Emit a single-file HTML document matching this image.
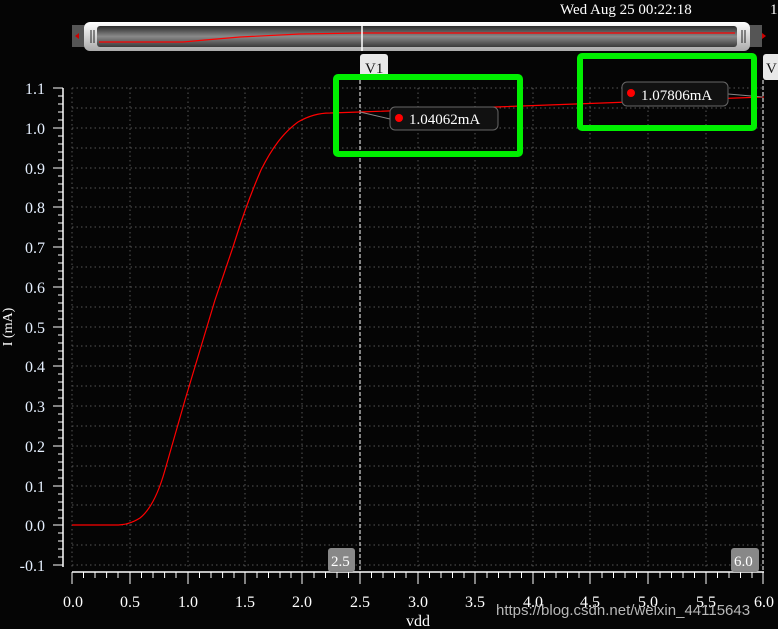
<!DOCTYPE html>
<html><head><meta charset="utf-8"><style>
html,body{margin:0;padding:0;background:#050505;width:778px;height:629px;overflow:hidden}
svg{display:block}
text{font-family:"Liberation Serif",serif;fill:#fff}
</style></head><body>
<svg width="778" height="629" viewBox="0 0 778 629" xmlns="http://www.w3.org/2000/svg">
<defs>
<linearGradient id="sb" x1="0" y1="0" x2="0" y2="1">
<stop offset="0" stop-color="#2a2a2a"/><stop offset="0.5" stop-color="#8a8a8a"/><stop offset="1" stop-color="#3a3a3a"/>
</linearGradient>
<linearGradient id="fr" x1="0" y1="0" x2="0" y2="1">
<stop offset="0" stop-color="#fff"/><stop offset="1" stop-color="#aaa"/>
</linearGradient>
</defs>
<text x="560" y="14" font-size="15">Wed Aug 25 00:22:18</text>
<text x="770" y="14" font-size="15">1</text>
<rect x="72" y="25" width="690" height="22" fill="#555"/>
<rect x="84" y="22" width="666" height="29" rx="6" fill="url(#fr)"/>
<rect x="97" y="26" width="640" height="21" rx="3" fill="url(#sb)"/>
<path d="M75 36 l4 -3 v6z M766 36 l-4 -3 v6z" fill="#c00"/>
<path d="M91 30v13M94 30v13M742 30v13M745 30v13" stroke="#222" stroke-width="1"/>
<path d="M99 42 L183 42 L205 40 L240 37 L300 34 L360 33 L735 33" stroke="#f00" stroke-width="1.2" fill="none"/>
<path d="M362 24 V51" stroke="#fff" stroke-width="1.5"/>
<g stroke="#555" stroke-width="1" stroke-dasharray="1.5,3">
<path d="M72 88H764M72 108H764M72 128H764M72 148H764M72 168H764M72 188H764M72 207H764M72 227H764M72 247H764M72 267H764M72 287H764M72 307H764M72 327H764M72 346H764M72 366H764M72 386H764M72 406H764M72 426H764M72 446H764M72 466H764M72 486H764M72 505H764M72 525H764M72 545H764M72 565H764"/>
<path d="M72 88V568M130 88V568M188 88V568M245 88V568M302 88V568M418 88V568M475 88V568M533 88V568M590 88V568M648 88V568M706 88V568"/>
</g>
<path d="M63 88V567M72 572H764" stroke="#fff" stroke-width="1.5"/>
<g stroke="#fff" stroke-width="1">
<path d="M53 88H63M53 128H63M53 168H63M53 207H63M53 247H63M53 287H63M53 327H63M53 366H63M53 406H63M53 446H63M53 486H63M53 525H63M53 565H63"/>
<path d="M58 96H63M58 104H63M58 112H63M58 120H63M58 136H63M58 144H63M58 152H63M58 160H63M58 176H63M58 184H63M58 192H63M58 200H63M58 215H63M58 223H63M58 231H63M58 239H63M58 255H63M58 263H63M58 271H63M58 279H63M58 295H63M58 303H63M58 311H63M58 319H63M58 335H63M58 343H63M58 351H63M58 359H63M58 374H63M58 382H63M58 390H63M58 398H63M58 414H63M58 422H63M58 430H63M58 438H63M58 454H63M58 462H63M58 470H63M58 478H63M58 494H63M58 502H63M58 510H63M58 518H63M58 533H63M58 541H63M58 549H63M58 557H63"/>
<path d="M72 572v12M130 572v12M188 572v12M245 572v12M302 572v12M360 572v12M418 572v12M475 572v12M533 572v12M590 572v12M648 572v12M706 572v12M763 572v12"/>
<path d="M83.5 572v6M95 572v6M106.6 572v6M118 572v6M141.5 572v6M153 572v6M164.6 572v6M176 572v6M199.5 572v6M211 572v6M222.6 572v6M234 572v6M257 572v6M268.5 572v6M280 572v6M291 572v6M314 572v6M325.5 572v6M337 572v6M348.5 572v6M371.5 572v6M383 572v6M394.5 572v6M406 572v6M429.5 572v6M441 572v6M452.5 572v6M464 572v6M487 572v6M498.5 572v6M510 572v6M521.5 572v6M544.5 572v6M556 572v6M567.5 572v6M579 572v6M602 572v6M613.5 572v6M625 572v6M636.5 572v6M660 572v6M671.5 572v6M683 572v6M694.5 572v6M717.5 572v6M729 572v6M740.5 572v6M752 572v6"/>
</g>
<g font-size="16" text-anchor="end" style="fill:#e6f0ff">
<text x="45" y="94" style="fill:#e6f0ff">1.1</text><text x="45" y="134" style="fill:#e6f0ff">1.0</text><text x="45" y="174" style="fill:#e6f0ff">0.9</text><text x="45" y="213" style="fill:#e6f0ff">0.8</text><text x="45" y="253" style="fill:#e6f0ff">0.7</text><text x="45" y="293" style="fill:#e6f0ff">0.6</text><text x="45" y="333" style="fill:#e6f0ff">0.5</text><text x="45" y="372" style="fill:#e6f0ff">0.4</text><text x="45" y="412" style="fill:#e6f0ff">0.3</text><text x="45" y="452" style="fill:#e6f0ff">0.2</text><text x="45" y="492" style="fill:#e6f0ff">0.1</text><text x="45" y="531" style="fill:#e6f0ff">0.0</text><text x="45" y="571" style="fill:#e6f0ff">-0.1</text>
</g>
<g font-size="16" text-anchor="middle">
<text x="73" y="607">0.0</text><text x="130" y="607">0.5</text><text x="188" y="607">1.0</text><text x="245" y="607">1.5</text><text x="302" y="607">2.0</text><text x="360" y="607">2.5</text><text x="418" y="607">3.0</text><text x="475" y="607">3.5</text><text x="533" y="607">4.0</text><text x="590" y="607">4.5</text><text x="648" y="607">5.0</text><text x="706" y="607">5.5</text><text x="764" y="607">6.0</text>
</g>
<text x="418" y="626" font-size="16" text-anchor="middle">vdd</text>
<text transform="translate(12,327) rotate(-90)" font-size="14" text-anchor="middle">I (mA)</text>
<text x="496" y="615" font-size="15" style="fill:#b8b8b8;font-family:'Liberation Sans',sans-serif">https://blog.csdn.net/weixin_44115643</text>
<path d="M360 80V572" stroke="#fff" stroke-width="1" stroke-dasharray="4,2"/>
<path d="M763 80V572" stroke="#fff" stroke-width="1" stroke-dasharray="4,2"/>
<path d="M72 525 L115 525 C125 525 132 523 140 518 C150 510 158 495 165 470 L185 400 L215 300 L233 247 C240 225 248 200 261 170 C272 148 283 133 298 122 C310 115 320 113 330 113 L360 112 L764 97" stroke="#f00" stroke-width="1.2" fill="none"/>
<rect x="360" y="54" width="28" height="26" rx="3" fill="#e8e8e8"/>
<text x="365" y="73" font-size="15" style="fill:#111">V1</text>
<rect x="763" y="54" width="20" height="26" rx="3" fill="#e8e8e8"/>
<text x="766" y="73" font-size="15" style="fill:#111">V</text>
<rect x="328" y="548" width="27" height="24" rx="3" fill="#888"/>
<text x="331" y="566" font-size="15">2.5</text>
<rect x="731" y="548" width="28" height="24" rx="3" fill="#888"/>
<text x="734" y="566" font-size="15">6.0</text>
<path d="M360 112 L390 119" stroke="#888"/>
<rect x="390" y="107" width="108" height="23" rx="5" fill="#111" stroke="#666"/>
<circle cx="399" cy="118" r="4" fill="#f00"/>
<text x="409" y="124" font-size="15">1.04062mA</text>
<path d="M728 94 L763 97" stroke="#888"/>
<rect x="622" y="82" width="106" height="24" rx="5" fill="#111" stroke="#666"/>
<circle cx="631" cy="93" r="4" fill="#f00"/>
<text x="641" y="100" font-size="15">1.07806mA</text>
<rect x="336" y="77" width="184" height="77" fill="none" stroke="#00f000" stroke-width="6" rx="2"/>
<rect x="580" y="56" width="174" height="72" fill="none" stroke="#00f000" stroke-width="6" rx="2"/>
</svg>
</body></html>
